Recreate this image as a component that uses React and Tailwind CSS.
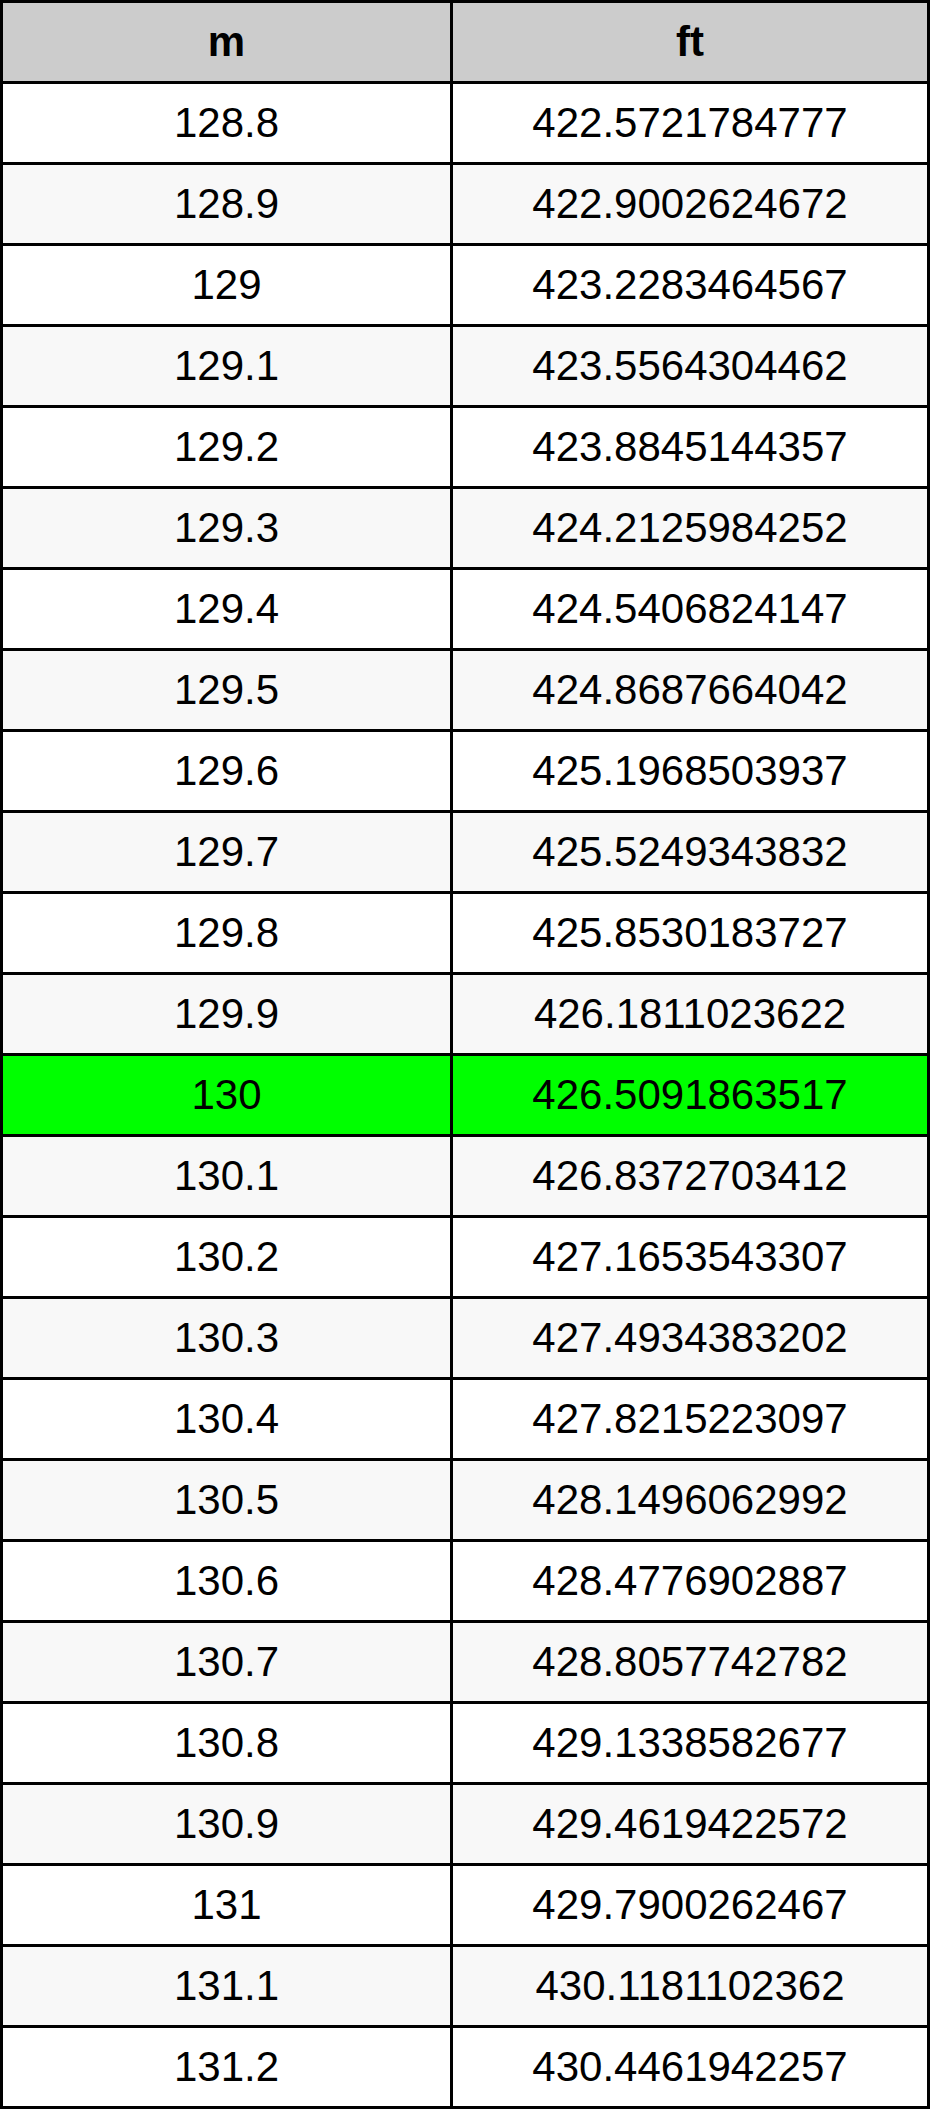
import React from "react";

const rows = [
  ["128.8", "422.5721784777"],
  ["128.9", "422.9002624672"],
  ["129", "423.2283464567"],
  ["129.1", "423.5564304462"],
  ["129.2", "423.8845144357"],
  ["129.3", "424.2125984252"],
  ["129.4", "424.5406824147"],
  ["129.5", "424.8687664042"],
  ["129.6", "425.1968503937"],
  ["129.7", "425.5249343832"],
  ["129.8", "425.8530183727"],
  ["129.9", "426.1811023622"],
  ["130", "426.5091863517"],
  ["130.1", "426.8372703412"],
  ["130.2", "427.1653543307"],
  ["130.3", "427.4934383202"],
  ["130.4", "427.8215223097"],
  ["130.5", "428.1496062992"],
  ["130.6", "428.4776902887"],
  ["130.7", "428.8057742782"],
  ["130.8", "429.1338582677"],
  ["130.9", "429.4619422572"],
  ["131", "429.7900262467"],
  ["131.1", "430.1181102362"],
  ["131.2", "430.4461942257"],
];

export default function App() {
  return (
    <div className="w-[930px] bg-white text-black font-['Liberation_Sans',Arial,sans-serif] text-[42px] leading-none">
      <div className="border-[3px] border-black">
        {/* header */}
        <div className="flex h-[81px] border-b-[3px] border-black bg-[#cccccc] font-bold">
          <div className="w-[450px] border-r-[3px] border-black flex items-center justify-center">m</div>
          <div className="flex-1 flex items-center justify-center">ft</div>
        </div>

        {rows.map(([m, ft], i) => {
          const last = i === rows.length - 1;
          let bg = i % 2 === 0 ? "bg-white" : "bg-[#f8f8f8]";
          if (m === "130") bg = "bg-[#00ff00]";
          return (
            <div
              key={m}
              className={`flex ${bg} ${last ? "h-[78px]" : "h-[81px] border-b-[3px] border-black"}`}
            >
              <div className="w-[450px] border-r-[3px] border-black flex items-center justify-center">{m}</div>
              <div className="flex-1 flex items-center justify-center">{ft}</div>
            </div>
          );
        })}
      </div>
    </div>
  );
}
